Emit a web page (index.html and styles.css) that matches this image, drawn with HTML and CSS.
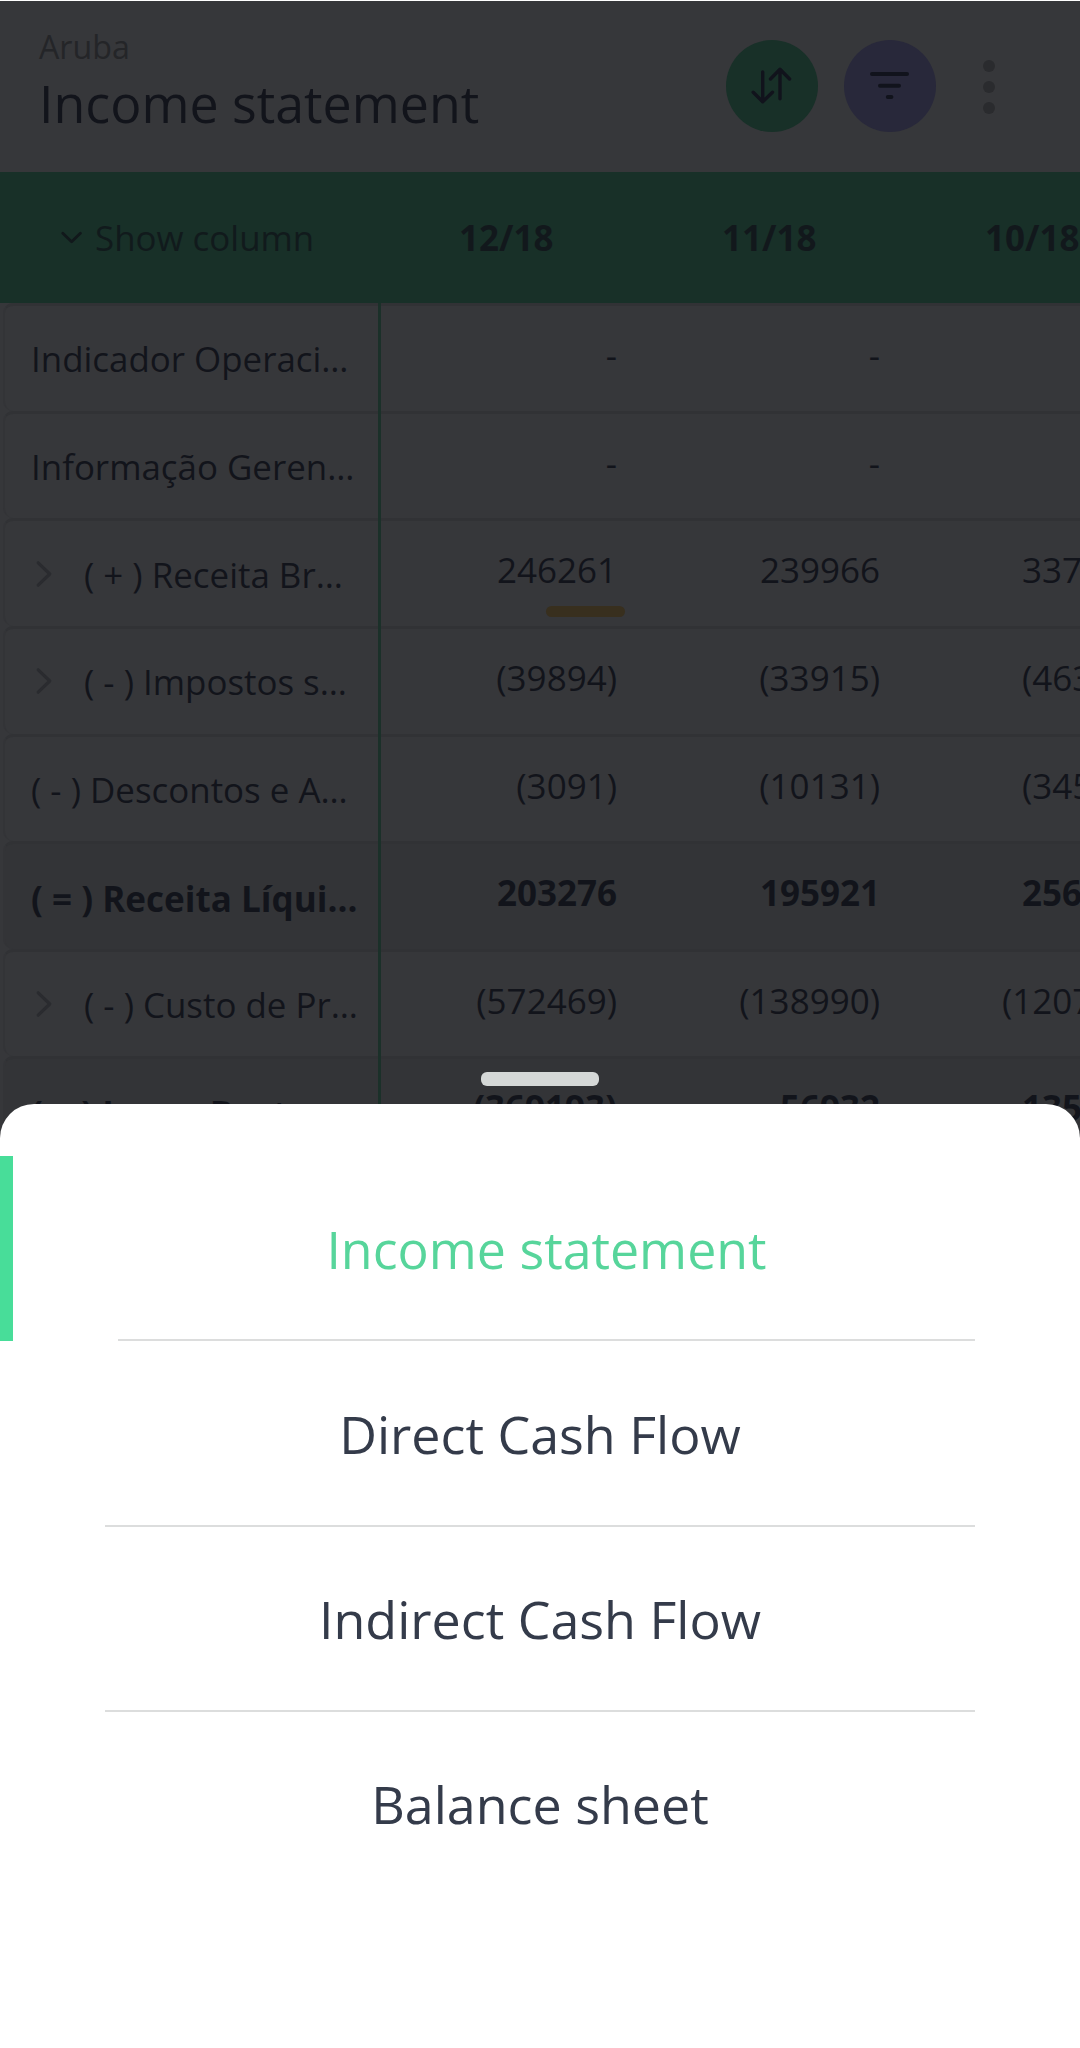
FILE: index.html
```html
<!DOCTYPE html>
<html lang="en">
<head>
<meta charset="utf-8">
<title>Income statement</title>
<link rel="stylesheet" href="styles.css">
</head>
<body>
<div class="screen">
  <header class="topbar">
    <div class="titles">
      <div class="company">Aruba</div>
      <h1 class="title">Income statement</h1>
    </div>
    <div class="actions">
      <div class="round round-green">
        <svg width="92" height="92" viewBox="0 0 92 92"><path d="M36.7 32v29.5M27.2 52.2l9.5 9.5 9.8-9.5M54 58.7V29.5M44.5 39l9.5-9.8L63.6 39"/></svg>
      </div>
      <div class="round round-purple">
        <svg class="filter" width="92" height="92" viewBox="0 0 92 92"><path d="M28 34h35M36 45.7h19M43.8 57h3.6"/></svg>
      </div>
      <div class="more"><i></i><i></i><i></i></div>
    </div>
  </header>

  <div class="thead">
    <div class="toggle">
      <svg width="22" height="13" viewBox="0 0 22 13"><path d="M1.8 2.2l8.8 8.6 8.8-8.6"/></svg>
      <span>Show column</span>
    </div>
    <div class="month">12/18</div>
    <div class="month">11/18</div>
    <div class="month">10/18</div>
  </div>

  <div class="table">
    <div class="row"><div class="first"><div class="label">Indicador Operaci…</div></div><div class="cell">-</div><div class="cell">-</div><div class="cell cut"></div></div>
    <div class="row"><div class="first"><div class="label">Informação Geren…</div></div><div class="cell">-</div><div class="cell">-</div><div class="cell cut"></div></div>
    <div class="row"><div class="first"><div class="label nested"><svg width="18" height="28" viewBox="0 0 18 28"><path d="M3.2 2.8L14.8 14 3.2 25.2"/></svg>( + ) Receita Br…</div></div><div class="cell">246261<span class="mark"></span></div><div class="cell">239966</div><div class="cell cut">337</div></div>
    <div class="row"><div class="first"><div class="label nested"><svg width="18" height="28" viewBox="0 0 18 28"><path d="M3.2 2.8L14.8 14 3.2 25.2"/></svg>( - ) Impostos s…</div></div><div class="cell">(39894)</div><div class="cell">(33915)</div><div class="cell cut">(463</div></div>
    <div class="row"><div class="first"><div class="label">( - ) Descontos e A…</div></div><div class="cell">(3091)</div><div class="cell">(10131)</div><div class="cell cut">(345</div></div>
    <div class="row total"><div class="first"><div class="label">( = ) Receita Líqui…</div></div><div class="cell">203276</div><div class="cell">195921</div><div class="cell cut">256</div></div>
    <div class="row"><div class="first"><div class="label nested"><svg width="18" height="28" viewBox="0 0 18 28"><path d="M3.2 2.8L14.8 14 3.2 25.2"/></svg>( - ) Custo de Pr…</div></div><div class="cell">(572469)</div><div class="cell">(138990)</div><div class="cell cut wide">(1207</div></div>
    <div class="row total"><div class="first"><div class="label">( = ) Lucro Bruto</div></div><div class="cell">(369193)</div><div class="cell">56932</div><div class="cell cut">135</div></div>
  </div>

  <div class="sheet-wrap">
    <div class="handle"></div>
    <div class="sheet">
      <div class="option active"><div class="name">Income statement</div></div>
      <div class="option"><div class="name">Direct Cash Flow</div></div>
      <div class="option"><div class="name">Indirect Cash Flow</div></div>
      <div class="option"><div class="name">Balance sheet</div></div>
    </div>
  </div>
</div>
</body>
</html>
```
FILE: styles.css
```css
* { box-sizing: border-box; }
body { margin: 0; background: #36373a; }
svg { display: block; fill: none; stroke-linecap: round; stroke-linejoin: round; flex: none; }

.screen {
  position: relative;
  width: 1080px;
  height: 2048px;
  overflow: hidden;
  background: #36373a;
  border-top: 1px solid #fff;
  font-family: "Open Sans", sans-serif;
  font-size: 35px;
  line-height: 48px;
  color: #12141b;
}

/* Top bar */
.topbar {
  height: 171px;
  display: flex;
  justify-content: space-between;
  padding: 0 85px 0 39px;
}
.titles { padding-top: 24px; }
.company { font-size: 32.2px; line-height: 44px; color: #242528; }
.title { margin: -1px 0 0; font-size: 51.9px; font-weight: 400; line-height: 70px; }
.actions { display: flex; padding-top: 39px; }
.round { width: 92px; height: 92px; border-radius: 50%; margin-right: 26px; }
.round svg { stroke: #11131c; stroke-width: 3.4; }
.round .filter { stroke-width: 4; }
.round-green { background: #183028; }
.round-purple { background: #28283a; }
.more { display: flex; flex-direction: column; gap: 9px; padding-top: 20px; margin-left: 21px; }
.more i { width: 12px; height: 12px; border-radius: 50%; background: #2a2b2e; }

/* Column headings */
.thead { display: flex; align-items: center; height: 131px; background: #183028; }
.toggle { display: flex; align-items: center; gap: 12px; width: 381px; padding-left: 61px; flex: none; font-size: 34.9px; color: #111a1c; }
.toggle svg { stroke: #11181b; stroke-width: 2.8; }
.month { width: 263px; flex: none; padding-left: 78px; font-weight: 700; color: #12181c; }

/* Statement rows */
.row { display: flex; height: 107.65px; }
.first { width: 381px; flex: none; padding-left: 3px; border-right: 3px solid #1b3029; }
.label {
  height: 100%;
  display: flex;
  align-items: center;
  padding: 2px 0 0 26px;
  border-top: 3px solid #313235;
  border-left: 2px solid #333437;
  border-radius: 10px 0 0 10px;
  font-size: 34.9px;
  white-space: pre;
}
.total .label { font-size: 35.1px; }
.nested svg { margin: -2px 31px 0 4px; stroke: #2a2b2f; stroke-width: 3.2; }
.cell {
  position: relative;
  width: 263px;
  flex: none;
  padding: 25px 27px 0 0;
  text-align: right;
  border-top: 3px solid #313235;
}
.cut { text-align: left; padding: 25px 0 0 115px; }
.wide { padding-left: 95px; }
.total { font-weight: 700; }
.total .label, .total .cell { background: #333437; }
.mark {
  position: absolute;
  right: 19px;
  bottom: 9px;
  width: 79px;
  height: 11px;
  border-radius: 6px;
  background: #382f1e;
}

/* Bottom sheet */
.sheet-wrap { position: absolute; left: 0; right: 0; top: 1071px; bottom: 0; display: flex; flex-direction: column; }
.handle { width: 118px; height: 14px; flex: none; margin: 0 auto 17.5px; border-radius: 6px; background: #d5d8d7; }
.sheet { flex: 1; padding-top: 52.6px; background: #fff; border-radius: 34px 34px 0 0; }
.option { height: 185.25px; padding: 0 105px; }
.name {
  height: 100%;
  display: flex;
  align-items: center;
  justify-content: center;
  padding-top: 2px;
  border-bottom: 2px solid #dcdddd;
  font-size: 52px;
  line-height: 72px;
  color: #343b4a;
}
.option:last-child .name { border-color: transparent; padding-top: 1px; }
.active { border-left: 13px solid #48dd99; }
.active .name { font-size: 51.9px; color: #57d59b; }
```
